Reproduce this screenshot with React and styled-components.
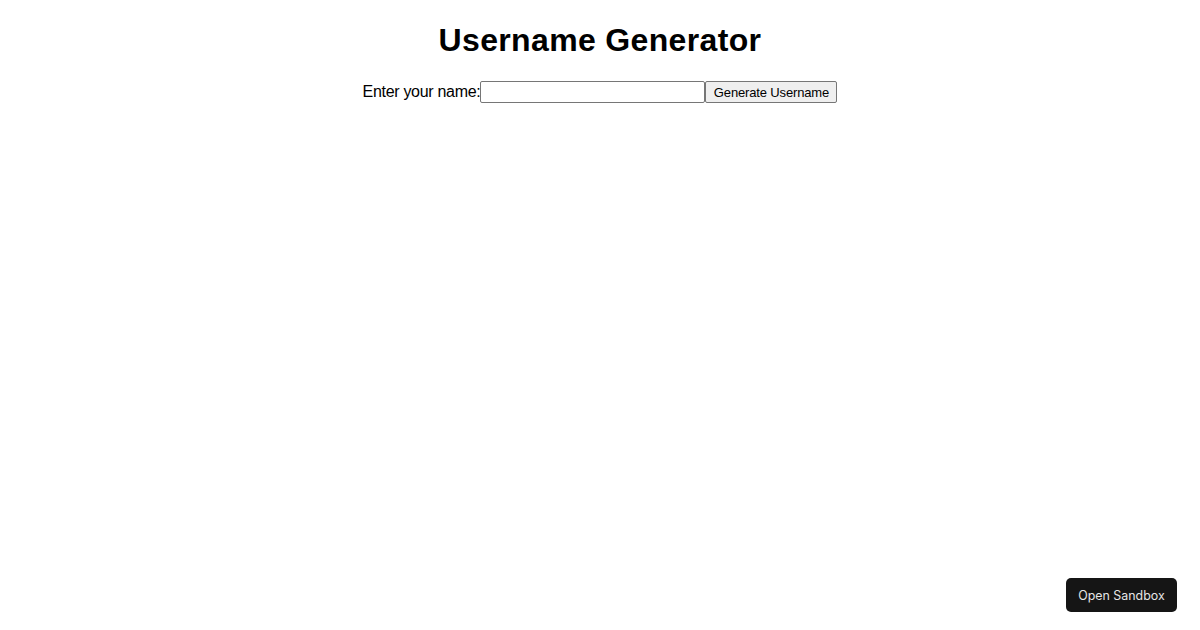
import React from 'react';
import styled, { createGlobalStyle } from 'styled-components';

const GlobalStyle = createGlobalStyle`
  html, body {
    margin: 0;
    background: #fff;
    font-family: "Liberation Sans", Arial, sans-serif;
    color: #000;
  }
`;

const Page = styled.div`
  text-align: center;
`;

const Title = styled.h1`
  font-size: 32px;
  font-weight: bold;
  letter-spacing: 0.35px;
  margin: 22px 0 22px;
`;

const Form = styled.div`
  display: flex;
  justify-content: center;
  align-items: center;
  font-size: 16px;
`;

const Label = styled.label`
  font-size: 16px;
  letter-spacing: -0.3px;
`;

const NameInput = styled.input`
  width: 225px;
  height: 22px;
  box-sizing: border-box;
  border: 1px solid #767676;
  border-radius: 2px;
  padding: 1px 2px;
  font-family: "Liberation Sans", Arial, sans-serif;
  font-size: 13.33px;
  margin: 0;
`;

const GenerateButton = styled.button`
  width: 132px;
  height: 22px;
  box-sizing: border-box;
  padding: 1px 4px;
  border: 1px solid #767676;
  border-radius: 2px;
  background: #efefef;
  font-family: "Liberation Sans", Arial, sans-serif;
  font-size: 13px;
  letter-spacing: -0.15px;
  color: #000;
  margin: 0;
`;

const SandboxButton = styled.button`
  position: fixed;
  right: 23px;
  bottom: 18px;
  width: 111px;
  height: 34px;
  border: none;
  border-radius: 5px;
  background: #151515;
  color: #e6e6e6;
  font-family: Inter, "Liberation Sans", sans-serif;
  font-size: 12.4px;
  cursor: pointer;
`;

export default function App() {
  const [name, setName] = React.useState('');

  return (
    <Page>
      <GlobalStyle />
      <Title>Username Generator</Title>
      <Form>
        <Label htmlFor="name">Enter your name:</Label>
        <NameInput id="name" value={name} onChange={e => setName(e.target.value)} />
        <GenerateButton>Generate Username</GenerateButton>
      </Form>
      <SandboxButton>Open Sandbox</SandboxButton>
    </Page>
  );
}
